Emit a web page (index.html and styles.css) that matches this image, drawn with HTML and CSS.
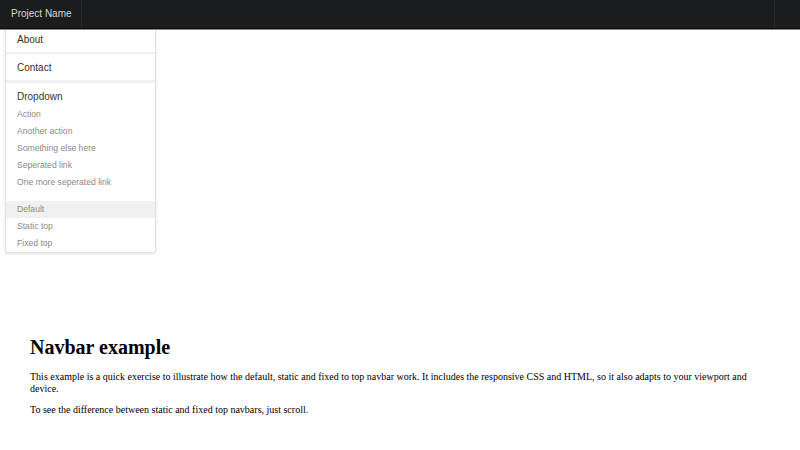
FILE: index.html
```html
<!DOCTYPE html>
<html>
<head>
<meta charset="utf-8">
<title>Navbar example</title>
<link rel="stylesheet" href="styles.css">
</head>
<body>
<nav class="navbar">
  <a class="brand">Project Name</a>
  <div class="spacer"></div>
  <div class="toggle"></div>
</nav>
<div class="menu">
  <a class="item first">About</a>
  <a class="item second">Contact</a>
  <div class="group">
    <a class="head">Dropdown</a>
    <a class="sub">Action</a>
    <a class="sub">Another action</a>
    <a class="sub">Something else here</a>
    <a class="sub">Seperated link</a>
    <a class="sub">One more seperated link</a>
    <div class="divider"></div>
    <a class="sub active">Default</a>
    <a class="sub">Static top</a>
    <a class="sub">Fixed top</a>
  </div>
</div>
<main class="container">
  <h1>Navbar example</h1>
  <p>This example is a quick exercise to illustrate how the default, static and fixed to top navbar work. It includes the responsive CSS and HTML, so it also adapts to your viewport and device.</p>
  <p>To see the difference between static and fixed top navbars, just scroll.</p>
</main>
</body>
</html>
```
FILE: styles.css
```css
html, body { margin: 0; padding: 0; background: #fff; }
body { font-family: "Liberation Serif", serif; font-size: 10px; color: #000; }
.navbar {
  display: flex;
  height: 28px;
  background: #1b1c1e;
  border-bottom: 1px solid #0a0a0a;
  box-shadow: 0 1px 0 #8a8a8a;
  font-family: "Liberation Sans", Arial, sans-serif;
}
.brand {
  width: 82px;
  box-sizing: border-box;
  padding-left: 11px;
  line-height: 28px;
  font-size: 10px;
  white-space: nowrap;
  color: #d8d8d8;
  border-right: 1px solid #2a2b2d;
}
.spacer { flex: 1; }
.toggle { width: 25px; border-left: 1px solid #2a2b2d; }
.menu {
  position: absolute;
  left: 5px;
  top: 30px;
  width: 151px;
  box-sizing: border-box;
  background: #fff;
  border: 1px solid #e2e2e2;
  border-top: none;
  border-radius: 0 0 3px 3px;
  box-shadow: 0 1px 3px rgba(0,0,0,0.12);
  font-family: "Liberation Sans", Arial, sans-serif;
  display: flex;
  flex-direction: column;
}
.item {
  display: block;
  padding: 0 11px;
  font-size: 10px;
  color: #333;
  line-height: 14px;
  border-bottom: 2px solid #f0f0f0;
}
.item.first { padding-top: 3px; padding-bottom: 5px; }
.item.second { padding-top: 7px; padding-bottom: 5px; border-bottom-width: 3px; }
.group { display: flex; flex-direction: column; padding-top: 4px; }
.head {
  display: block;
  padding: 3px 11px 2px;
  font-size: 10px;
  line-height: 14px;
  color: #333;
}
.sub {
  display: block;
  padding: 0 11px;
  height: 17px;
  line-height: 17px;
  font-size: 8.6px;
  color: #8a8a8a;
}
.divider { height: 10px; }
.sub.active { background: #f0f0f0; }
.container {
  padding: 307px 30px 0 30px;
}
h1 {
  font-size: 20px;
  line-height: 23px;
  margin: 0 0 12px;
}
p {
  font-size: 10px;
  line-height: 11.5px;
  margin: 0 0 10px;
}
```
